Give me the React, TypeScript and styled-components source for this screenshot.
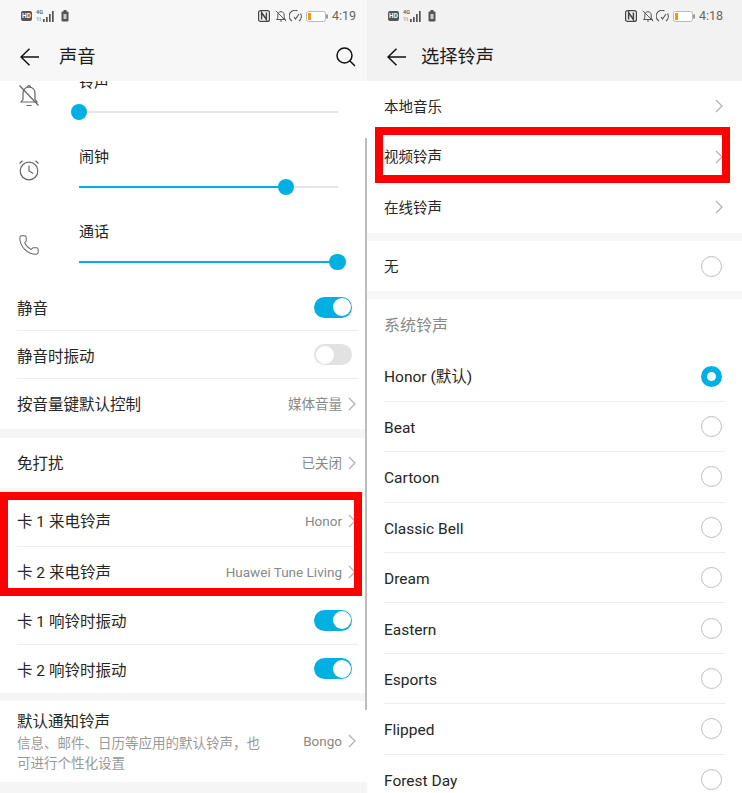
import { FC, ReactNode } from "react";
import styled, { createGlobalStyle } from "styled-components";
import { Phone as PhoneGlyph } from "lucide-react";

const ACCENT = "#00b0e2";

const GlobalStyle = createGlobalStyle`
  html, body {
    margin: 0;
    padding: 0;
    background: #fff;
  }
  body {
    font-family: Roboto, "Noto Sans CJK SC", sans-serif;
    color: #222;
  }
`;

const Page = styled.div`
  display: grid;
  grid-template-columns: 367px 375px;
  width: 742px;
  height: 793px;
  overflow: hidden;
`;

const Phone = styled.section`
  position: relative;
  display: flex;
  flex-direction: column;
  height: 793px;
  overflow: hidden;
  background: #fff;
`;

const Header = styled.header<{ $bg: string; $right: number }>`
  flex: none;
  height: 81px;
  padding: 0 ${(p) => p.$right}px 0 0;
  background: ${(p) => p.$bg};
  box-sizing: border-box;
`;

const Status = styled.div`
  display: flex;
  align-items: center;
  justify-content: space-between;
  height: 32px;
  padding-left: 21px;
`;

const StatusGroup = styled.div`
  display: flex;
  align-items: center;
`;

const HdBadge = styled.span`
  display: flex;
  align-items: center;
  justify-content: center;
  width: 11px;
  height: 10px;
  border-radius: 2px;
  background: #555;
  color: #fff;
  font-size: 6.5px;
  font-weight: 700;
  line-height: 1;
`;

const Network = styled.span`
  display: flex;
  flex-direction: column;
  gap: 2px;
  width: 8px;
  margin-left: 4px;
  color: #666;
  font-size: 5.5px;
  font-weight: 700;
  line-height: 1;
`;

const NetworkSub = styled.span`
  color: #aaa;
`;

const Time = styled.span`
  margin-left: 4px;
  color: #666;
  font-size: 12.5px;
  line-height: 1;
`;

const TitleBar = styled.div<{ $gap: number }>`
  display: flex;
  align-items: center;
  gap: ${(p) => p.$gap}px;
  height: 49px;
  padding-left: 20px;
`;

const Title = styled.h1`
  flex: 1;
  margin: 0;
  padding-top: 2px;
  color: #1c1c1c;
  font-size: 18.3px;
  font-weight: 400;
  line-height: 1;
`;

const Scroll = styled.div`
  flex: 1;
  overflow: hidden;
`;

const Offset = styled.div`
  margin-top: -22px;
`;

const SliderRow = styled.div`
  display: flex;
  height: 75px;
`;

const SliderIcon = styled.div`
  display: flex;
  justify-content: center;
  flex: none;
  width: 58px;
  padding-top: 25px;
  color: #666;
`;

const SliderBody = styled.div`
  width: 258.500px;
  margin-left: 21px;
`;

const SliderLabel = styled.div`
  height: 23px;
  padding-top: 14px;
  font-size: 15px;
  line-height: 18px;
  box-sizing: border-box;
  margin-bottom: 29px;
`;

const Track = styled.div`
  position: relative;
  height: 2px;
  background: #e6e6e6;
`;

const TrackFill = styled.div`
  height: 100%;
  background: ${ACCENT};
`;

const Thumb = styled.span`
  position: absolute;
  top: 50%;
  width: 16.500px;
  height: 16.500px;
  margin: -8.250px 0 0 -8.250px;
  border-radius: 50%;
  background: ${ACCENT};
`;

const Gap = styled.div<{ $h: number; $bg: string }>`
  height: ${(p) => p.$h}px;
  background: ${(p) => p.$bg};
`;

const Row = styled.div<{ $h: number; $inset: number; $divider?: boolean }>`
  display: flex;
  align-items: center;
  justify-content: space-between;
  height: ${(p) => p.$h}px;
  margin: 0 ${(p) => p.$inset}px 0 17px;
  box-sizing: border-box;
  border-bottom: ${(p) => (p.$divider ? "1px solid #eeeeee" : "0")};
`;

const RowLabel = styled.span<{ $size?: number; $up?: number; $down?: number }>`
  padding-top: ${(p) => p.$down ?? 0}px;
  padding-bottom: ${(p) => p.$up ?? 0}px;
  color: #262626;
  font-size: ${(p) => p.$size ?? 15.5}px;
  white-space: pre;
`;

const Side = styled.span`
  display: flex;
  align-items: center;
  gap: 6px;
  padding-right: 2px;
  color: #888;
  font-size: 13.5px;
  white-space: nowrap;
`;

const SideValue = styled.span<{ $latin?: boolean }>`
  padding-bottom: ${(p) => (p.$latin ? 0 : 2)}px;
`;

const ToggleTrack = styled.span<{ $on: boolean }>`
  display: flex;
  justify-content: ${(p) => (p.$on ? "flex-end" : "flex-start")};
  align-items: center;
  width: 38px;
  height: 21px;
  margin-right: 6px;
  padding: 0 1.5px;
  box-sizing: border-box;
  border-radius: 11px;
  background: ${(p) => (p.$on ? ACCENT : "#e2e2e2")};
`;

const ToggleKnob = styled.span`
  width: 18px;
  height: 18px;
  border-radius: 50%;
  background: #fff;
`;

const NotifyRow = styled.div`
  display: flex;
  align-items: center;
  justify-content: space-between;
  height: 81px;
  margin: 0 9px 0 17px;
`;

const NotifyText = styled.div`
  width: 250px;
`;

const NotifyHint = styled.div`
  margin-top: 2px;
  color: #999;
  font-size: 13.5px;
  line-height: 20px;
`;

const SectionTitle = styled.div`
  display: flex;
  align-items: center;
  height: 52.500px;
  padding: 0 0 2px 17px;
  box-sizing: border-box;
  color: #888;
  font-size: 16px;
`;

const Radio = styled.span<{ $on?: boolean }>`
  width: 21px;
  height: 21px;
  margin-right: 3.5px;
  box-sizing: border-box;
  border-radius: 50%;
  border: ${(p) => (p.$on ? `6px solid ${ACCENT}` : "1.3px solid #bdbdbd")};
`;

const Highlight = styled.div<{ $x: number; $y: number; $w: number; $h: number }>`
  position: absolute;
  left: ${(p) => p.$x}px;
  top: ${(p) => p.$y}px;
  width: ${(p) => p.$w}px;
  height: ${(p) => p.$h}px;
  box-sizing: border-box;
  border: 8px solid #ff0000;
`;

const Scrollbar = styled.div`
  position: absolute;
  left: 365px;
  top: 138px;
  width: 2px;
  height: 572px;
  background: #bdbdbd;
`;

const Chevron: FC = () => (
  <svg width="8" height="14" viewBox="0 0 8 14" fill="none" stroke="#b0b0b0" strokeWidth="1.2">
    <path d="M1 1l6 6-6 6" />
  </svg>
);

const BackArrow: FC = () => (
  <svg width="19" height="18" viewBox="0 0 19 18" fill="none" stroke="#111" strokeWidth="1.5">
    <path d="M19 9H1M9.5.8L1 9l8.5 8.2" />
  </svg>
);

const SearchIcon: FC = () => (
  <svg width="20" height="20" viewBox="0 0 20 20" fill="none" stroke="#111" strokeWidth="1.5">
    <circle cx="8.500" cy="8.500" r="7.500" />
    <path d="M14 14l5 5" />
  </svg>
);

const BellOffIcon: FC = () => (
  <svg width="22" height="24" viewBox="0 0 22 24" fill="none" stroke="#666" strokeWidth="1.2">
    <path d="M5 9.5c0-3.6 2.4-6.3 6-6.3s6 2.7 6 6.300v6l2 2.500H3l2-2.500z" />
    <path d="M9.500 2.800c.2-1.500 2.800-1.500 3 0M8.500 21.500h5M1.500 1.500l19 20" />
  </svg>
);

const AlarmIcon: FC = () => (
  <svg width="22" height="22" viewBox="0 0 22 22" fill="none" stroke="#666" strokeWidth="1.2">
    <circle cx="11" cy="12" r="8.800" />
    <path d="M11 6.500V12l4.200 2.500M1.500 4.500L4.500 1.800M20.500 4.500l-3-2.700" />
  </svg>
);

const SignalBars: FC = () => (
  <svg width="12" height="11" viewBox="0 0 12 11" fill="#555" style={{ marginLeft: -1 }}>
    <rect x="0" y="8" width="1.700" height="3" />
    <rect x="3" y="6" width="1.700" height="5" />
    <rect x="6" y="3" width="1.700" height="8" />
    <rect x="9" y="0" width="1.700" height="11" />
  </svg>
);

const SmallBattery: FC = () => (
  <svg width="8" height="12" viewBox="0 0 8 12" style={{ marginLeft: 6 }}>
    <rect x="2.500" y="0" width="3" height="2" fill="#555" />
    <rect x="0.500" y="1.500" width="7" height="10" rx="1" fill="#555" />
    <rect x="2.500" y="4" width="3" height="5" fill="#ccc" />
  </svg>
);

const NfcIcon: FC = () => (
  <svg width="12" height="12" viewBox="0 0 12 12" fill="none" stroke="#444" strokeWidth="1.200">
    <rect x="0.600" y="0.600" width="10.800" height="10.800" rx="2" />
    <path d="M3.600 9.500V2.500l4.800 7V2.500" strokeWidth="1.500" />
  </svg>
);

const MuteIcon: FC = () => (
  <svg width="12" height="12" viewBox="0 0 12 12" fill="none" stroke="#555" strokeWidth="1" style={{ marginLeft: 5 }}>
    <path d="M2.800 5c0-2 1.300-3.300 3.200-3.300S9.200 3 9.200 5v3l1.300 1.500h-9L2.800 8zM5 11h2M.8.800l10.400 10.400" />
  </svg>
);

const GaugeIcon: FC = () => (
  <svg width="13" height="12" viewBox="0 0 13 12" fill="none" stroke="#555" strokeWidth="1.100" style={{ marginLeft: 2 }}>
    <path d="M3 11A5.800 5.800 0 0 1 8.500 .8M11.500 3.500A5.800 5.800 0 0 1 10 11M5 7l1.500 2 3.500-5" />
  </svg>
);

const BatteryIcon: FC = () => (
  <svg width="22" height="11" viewBox="0 0 22 11" style={{ marginLeft: 4 }}>
    <rect x="0.500" y="0.500" width="19" height="10" rx="2" fill="#fff" stroke="#bbb" />
    <rect x="2" y="2" width="3" height="7" fill="#f59a00" />
    <rect x="20" y="3.500" width="2" height="4" fill="#999" />
  </svg>
);

const StatusBar: FC<{ time: string }> = ({ time }) => (
  <Status>
    <StatusGroup>
      <HdBadge>HD</HdBadge>
      <Network>
        4G
        <NetworkSub>1t</NetworkSub>
      </Network>
      <SignalBars />
      <SmallBattery />
    </StatusGroup>
    <StatusGroup>
      <NfcIcon />
      <MuteIcon />
      <GaugeIcon />
      <BatteryIcon />
      <Time>{time}</Time>
    </StatusGroup>
  </Status>
);

const Slider: FC<{ label: string; value: number; icon: ReactNode }> = ({ label, value, icon }) => (
  <SliderRow>
    <SliderIcon>{icon}</SliderIcon>
    <SliderBody>
      <SliderLabel>{label}</SliderLabel>
      <Track>
        <TrackFill style={{ width: `${value}%` }} />
        <Thumb style={{ left: `${value}%` }} />
      </Track>
    </SliderBody>
  </SliderRow>
);

const Toggle: FC<{ on: boolean }> = ({ on }) => (
  <ToggleTrack $on={on}>
    <ToggleKnob />
  </ToggleTrack>
);

const ValueRow: FC<{
  label: string;
  value?: string;
  latin?: boolean;
  h: number;
  divider?: boolean;
  inset?: number;
  size?: number;
}> = ({ label, value, latin, h, divider, inset = 9, size }) => (
  <Row $h={h} $inset={inset} $divider={divider}>
    <RowLabel $size={size} $up={2}>
      {label}
    </RowLabel>
    <Side>
      {value && <SideValue $latin={latin}>{value}</SideValue>}
      <Chevron />
    </Side>
  </Row>
);

const ToggleRow: FC<{ label: string; on: boolean; h: number; divider?: boolean }> = ({ label, on, h, divider }) => (
  <Row $h={h} $inset={9} $divider={divider}>
    <RowLabel>{label}</RowLabel>
    <Toggle on={on} />
  </Row>
);

const ringtones = ["Beat", "Cartoon", "Classic Bell", "Dream", "Eastern", "Esports", "Flipped", "Forest Day"];

const App: FC = () => {
  return (
    <Page>
      <GlobalStyle />
      <Phone>
        <Header $bg="#f7f7f7" $right={11}>
          <StatusBar time="4:19" />
          <TitleBar $gap={20}>
            <BackArrow />
            <Title>声音</Title>
            <SearchIcon />
          </TitleBar>
        </Header>
        <Scroll>
          <Offset>
            <Slider label="铃声" value={0} icon={<BellOffIcon />} />
            <Slider label="闹钟" value={80} icon={<AlarmIcon />} />
            <Slider label="通话" value={100} icon={<PhoneGlyph size={22} strokeWidth={1.1} color="#666" />} />
            <ToggleRow label="静音" on h={47} divider />
            <ToggleRow label="静音时振动" on={false} h={48} divider />
            <ValueRow label="按音量键默认控制" value="媒体音量" h={50} />
            <Gap $h={8.500} $bg="#f5f5f5" />
            <ValueRow label="免打扰" value="已关闭" h={50.500} />
            <Gap $h={8.500} $bg="#f5f5f5" />
            <ValueRow label="卡 1 来电铃声" value="Honor" latin h={50} divider />
            <ValueRow label="卡 2 来电铃声" value="Huawei Tune Living" latin h={50} />
            <ToggleRow label="卡 1 响铃时振动" on h={48} divider />
            <ToggleRow label="卡 2 响铃时振动" on h={48} />
            <Gap $h={8} $bg="#f5f5f5" />
            <NotifyRow>
              <NotifyText>
                <RowLabel>默认通知铃声</RowLabel>
                <NotifyHint>信息、邮件、日历等应用的默认铃声，也可进行个性化设置</NotifyHint>
              </NotifyText>
              <Side>
                <SideValue $latin>Bongo</SideValue>
                <Chevron />
              </Side>
            </NotifyRow>
            <Gap $h={20} $bg="#f5f5f5" />
          </Offset>
        </Scroll>
        <Scrollbar />
        <Highlight $x={0} $y={492} $w={362} $h={104} />
      </Phone>

      <Phone>
        <Header $bg="#f2f2f2" $right={19}>
          <StatusBar time="4:18" />
          <TitleBar $gap={15}>
            <BackArrow />
            <Title>选择铃声</Title>
          </TitleBar>
        </Header>
        <Scroll>
          <ValueRow label="本地音乐" h={50.500} inset={17} size={14.500} />
          <ValueRow label="视频铃声" h={50.500} inset={17} size={14.500} />
          <ValueRow label="在线铃声" h={50.500} inset={17} size={14.500} />
          <Gap $h={8.500} $bg="#f7f7f7" />
          <Row $h={50} $inset={17}>
            <RowLabel $size={14.500} $up={2}>
              无
            </RowLabel>
            <Radio />
          </Row>
          <Gap $h={8} $bg="#f7f7f7" />
          <SectionTitle>系统铃声</SectionTitle>
          <Row $h={50.400} $inset={17} $divider>
            <RowLabel $up={2}>Honor (默认)</RowLabel>
            <Radio $on />
          </Row>
          {ringtones.map((name) => (
            <Row key={name} $h={50.400} $inset={17} $divider>
              <RowLabel $down={3}>{name}</RowLabel>
              <Radio />
            </Row>
          ))}
        </Scroll>
        <Highlight $x={8} $y={127} $w={355} $h={56} />
      </Phone>
    </Page>
  );
};

export default App;
